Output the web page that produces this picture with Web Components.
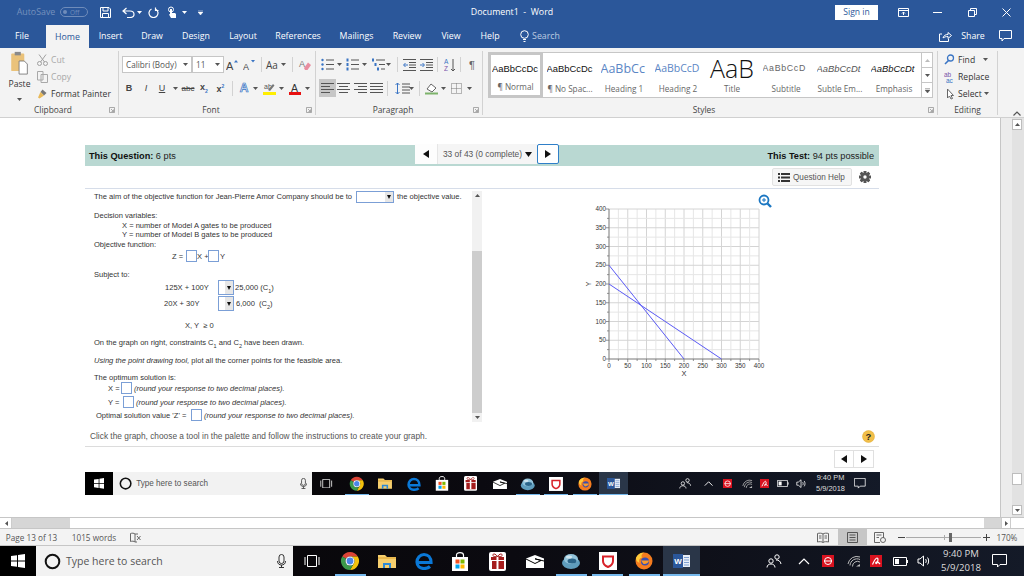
<!DOCTYPE html>
<html lang="en">
<head>
<meta charset="UTF-8">
<title>Document1 - Word</title>
<style>
html,body{margin:0;height:576px;overflow:hidden;background:#fff;font-family:"Open Sans","Noto Sans",sans-serif}
</style>
</head>
<body>
<word-app></word-app>

<script>
// helpers shared by the elements
const row = (x0, items) => {
  let p = x0
  return items.map(([c, w, h]) => {
    const l = c - w / 2
    const s = `<span class="c" style="width:${w}px;margin-left:${l - p}px">${h}</span>`
    p = l + w
    return s
  }).join("")
}
const svg = (w, h, body, extra = "") => `<svg width="${w}" height="${h}" viewBox="0 0 ${w} ${h}" ${extra}>${body}</svg>`
const tri = (col = "#555") => svg(5, 3, `<path d="M0 0H5L2.5 3Z" fill="${col}"/>`)
const vdiv = `<i style="display:block;width:1px;height:15px;background:#d2d2d2"></i>`
const cellCss = `.c{display:flex;align-items:center;justify-content:center;flex:none;height:100%;white-space:nowrap}`
const lines = (x, ys, w, col = "#555") => ys.map(y => `<path d="M${x} ${y}h${w}" stroke="${col}"/>`).join("")

class WordTitlebar extends HTMLElement {
  constructor() {
    super()
    this.attachShadow({ mode: "open" })
    const w = "#fff"
    this.shadowRoot.innerHTML = `
    <style>
      :host{display:flex;height:24px;background:#2b579a;color:#fff;font-size:8.8px}
      ${cellCss}
      .auto{color:#7591bd}
      .tog{width:28px;height:10px;border:1px solid #6f8cba;border-radius:6px;box-sizing:border-box;display:flex;align-items:center;gap:3px;padding-left:2px;font-size:6.5px;color:#6f8cba}
      .tog b{width:4px;height:4px;border-radius:50%;background:#6f8cba}
      .sign{background:#fff;color:#2b579a;width:43px;height:15px;display:flex;align-items:center;justify-content:center;font-size:8.6px}
    </style>
    ${row(0, [
      [36, 42, `<span class="auto">AutoSave</span>`],
      [74, 28, `<span class="tog"><b></b>Off</span>`],
      [105.5, 11, svg(11, 11, `<path d="M.5.5H9L10.5 2V10.5H.5Z M3 .5V4H8V.5 M2.5 10.5V6.5H8.5V10.5" fill="none" stroke="${w}"/>`)],
      [128, 13, svg(13, 11, `<path d="M4.5 1 1 4l3.5 3M1.5 4H8c2.5 0 4 1.500 4 3.300S10.500 10.500 8 10.500H5" fill="none" stroke="${w}" stroke-width="1.200"/>`)],
      [139, 5, tri(w)],
      [153, 11, svg(11, 11, `<path d="M3.500 2A4.500 4.500 0 1 0 7.500 2M7.500 .500V3.500H10.500" fill="none" stroke="${w}" stroke-width="1.200"/>`)],
      [172, 10, svg(10, 13, `<circle cx="4" cy="3.500" r="2.500" fill="none" stroke="${w}"/><path d="M3 3h2v4h3l1 1v4H4L2 8.500 3 8Z" fill="${w}"/>`)],
      [184.5, 5, tri(w)],
      [200, 5, svg(5, 5, `<path d="M0 0H5M0 2H5L2.500 5Z" fill="${w}" stroke="${w}" stroke-width=".5"/>`)],
      [512, 130, `<span>Document1&nbsp; - &nbsp;Word</span>`],
      [856.5, 43, `<span class="sign">Sign in</span>`],
      [903, 11, svg(11, 9, `<path d="M.5.5H10.500V8.500H.5ZM.5 2.500H10.500M5.500 7V4M4 5.500 5.500 4 7 5.500" fill="none" stroke="${w}"/>`)],
      [937.500, 9, svg(9, 1, `<path d="M0 .5H9" stroke="${w}"/>`)],
      [972, 9, svg(9, 9, `<path d="M.5 2.500H6.500V8.500H.5ZM2.500 2.500V.5H8.500V6.500H6.500" fill="none" stroke="${w}"/>`)],
      [1006, 9, svg(9, 9, `<path d="M.5.5 8.500 8.500M8.500.5.5 8.500" stroke="${w}"/>`)]
    ])}`
  }
}

class WordTabs extends HTMLElement {
  constructor() {
    super()
    this.attachShadow({ mode: "open" })
    const w = "#fff"
    const on = `<span class="home">Home</span>`
    this.shadowRoot.innerHTML = `
    <style>
      :host{display:flex;height:24px;background:#2b579a;color:#fff;font-size:8.8px}
      ${cellCss}
      .home{display:flex;align-items:center;justify-content:center;width:43px;height:23px;margin-top:1px;background:#f3f3f3;color:#2b579a}
      .dim{color:#bccbe0}
    </style>
    ${row(0, [
      [22, 20, "File"], [67.5, 43, on], [110.5, 22, "Insert"], [152, 22, "Draw"], [196, 30, "Design"],
      [243, 30, "Layout"], [298, 44, "References"], [356.5, 36, "Mailings"], [407, 30, "Review"], [451, 24, "View"], [490, 22, "Help"],
      [524.5, 9, svg(9, 13, `<circle cx="4.500" cy="4.500" r="3.800" fill="none" stroke="${w}"/><path d="M3 9.500H6M3.500 11.500H5.500" stroke="${w}"/>`)],
      [546, 30, `<span class="dim">Search</span>`],
      [945, 13, svg(13, 11, `<path d="M3 3H.5V10.500H9.500V8M4 7C4.500 4.500 6.500 3.500 9 3.500V1.500L12.500 4.500 9 7.500V5.500C7 5.500 5 6 4 7Z" fill="none" stroke="${w}"/>`)],
      [973, 26, "Share"],
      [1005.500, 13, svg(13, 12, `<path d="M.5.5H12.500V8.500H5L3 11V8.500H.5Z" fill="none" stroke="${w}"/>`)]
    ])}`
  }
}

class RibbonGroup extends HTMLElement {
  constructor() {
    super()
    this.attachShadow({ mode: "open" })
    const launcher = this.hasAttribute("launcher")
      ? `<span class="lc">${svg(6, 6, `<path d="M.5 5.500V.5H5.500V5.500ZM2 2 4.500 4.500M4.500 2.500V4.500H2.500" fill="none" stroke="#8a8a8a" stroke-width=".7"/>`)}</span>` : ""
    this.shadowRoot.innerHTML = `
    <style>
      :host{display:flex;flex-direction:column;flex:none;box-sizing:border-box;height:64px;border-right:1px solid #d2d2d2}
      .body{flex:1;min-height:0}
      .lbl{display:flex;height:12px;margin-bottom:-.5px;font-size:8.4px;color:#444;align-items:center}
      .lbl span:first-child{flex:1;text-align:center}
      .lc{width:12px;display:flex;justify-content:center}
    </style>
    <div class="body"><slot></slot></div>
    <div class="lbl"><span>${this.getAttribute("label")}</span>${launcher}</div>`
  }
}

class WordRibbon extends HTMLElement {
  constructor() {
    super()
    this.attachShadow({ mode: "open" })
    const blue = "#3a75c4", g = "#666"
    const t = tri()
    const bullets = svg(13, 13, `<g fill="${blue}"><circle cx="1.500" cy="2" r="1.200"/><circle cx="1.500" cy="6.500" r="1.200"/><circle cx="1.500" cy="11" r="1.200"/></g>${lines(5, [2, 6.5, 11], 8)}`)
    const numbers = svg(13, 13, `<g fill="${blue}"><rect x=".5" y=".5" width="2" height="3"/><rect x=".5" y="5" width="2" height="3"/><rect x=".5" y="9.500" width="2" height="3"/></g>${lines(5, [2, 6.5, 11], 8)}`)
    const multi = svg(13, 13, `<g fill="${blue}"><rect x="0" y=".5" width="2" height="3"/><rect x="2.500" y="5" width="2" height="3"/><rect x="5" y="9.500" width="2" height="3"/></g>${lines(4, [2], 9)}${lines(7, [6.5], 6)}${lines(9, [11], 4)}`)
    const indent = dir => svg(13, 12, `${lines(0, [.5, 11.5], 13)}${lines(6, [3.5, 6, 8.5], 7)}<path d="${dir ? "M0 6H4M2.500 4 4.500 6 2.500 8" : "M5 6H1M2.500 4 .5 6 2.500 8"}" fill="none" stroke="${blue}"/>`)
    const al = (a) => svg(13, 11, [.5, 3.5, 6.5, 9.5].map((y, i) => {
      const w = a == "j" ? 13 : (i % 2 ? 9 : 13)
      const x = a == "l" || a == "j" ? 0 : a == "c" ? (13 - w) / 2 : 13 - w
      return `<path d="M${x} ${y}h${w}" stroke="#555"/>`
    }).join(""))
    this.shadowRoot.innerHTML = `
    <style>
      :host{display:flex;height:70px;box-sizing:border-box;padding-top:3px;background:#f3f3f3;border-bottom:1px solid #d0d0d0;color:#444;font-size:8.6px;overflow:hidden}
      ${cellCss}
      .col{display:flex;flex-direction:column}
      .clip{display:flex;height:100%}
      .paste{width:37px;display:flex;flex-direction:column;align-items:center;padding-left:2px;box-sizing:border-box}
      .paste span{line-height:12px;margin-top:3px;margin-left:0;color:#333}
      .act{height:17px;display:flex;align-items:center;gap:3px;color:#333}
      .act.off{color:#a8a8a8}
      .act svg{flex:none}
      .r{display:flex;align-items:center}
      .r1{height:17px;margin-top:5px}
      .r2{height:18px;margin-top:6px}
      .combo{display:flex;width:100%;height:17px;box-sizing:border-box;background:#fff;border:1px solid #c6c6c6;align-items:center;justify-content:space-between;padding:0 3px;font-size:8.2px;color:#555}
      .sel{background:#c6c6c6;width:17px;height:18px;display:flex;align-items:center;justify-content:center}
      .tx{font:bold 9px "Liberation Sans",sans-serif;color:#444}
      .gal{display:flex;margin:1px 0 0 5px;width:445px;height:46px;box-sizing:border-box;border:1px solid #c6c6c6;background:#fff}
      .st{width:54px;flex:none;box-sizing:border-box;display:flex;flex-direction:column;align-items:center;overflow:hidden}
      .st:first-child{border:3px solid #c6c6c6;margin:-1px 0 -1px -1px;width:55px;height:46px}
      .st b{font-weight:400;height:30px;width:47px;overflow:hidden;white-space:nowrap;display:flex;align-items:center;justify-content:flex-start;font-family:"Liberation Sans",sans-serif;font-size:9.4px;color:#111}
      .st:first-child b{height:26px}
      .st u{text-decoration:none;font-size:8.2px;color:#666;line-height:12px;white-space:nowrap}
      .sc{margin-left:auto;width:11px;flex:none;display:flex;flex-direction:column;border-left:1px solid #c6c6c6}
      .sc span{flex:1;display:flex;align-items:center;justify-content:center;border-bottom:1px solid #c6c6c6}
      .sc span:last-child{border:0}
      .ed{padding-left:6px}
      .fold{display:flex;align-items:flex-end;padding:0 0 1px 8px}
    </style>
    <ribbon-group label="Clipboard" launcher style="width:119px">
      <div class="clip">
        <div class="paste">
          ${svg(21, 27, `<rect x="1" y="3" width="15" height="20" rx="1" fill="#eac27a"/><rect x="5" y="1" width="7" height="4" fill="#8a8a8a"/><path d="M10 11.500H16L19.500 15V26.500H10Z" fill="#fff" stroke="#777"/>`)}
          <span>Paste</span>
          <span style="margin:2px 0 0">${t}</span>
        </div>
        <div class="col">
          <div class="act off">${svg(11, 12, `<circle cx="2.500" cy="9.500" r="2" fill="none" stroke="#a0a0a0"/><circle cx="8.500" cy="9.500" r="2" fill="none" stroke="#a0a0a0"/><path d="M3.500 8 9 .5M7.500 8 2 .5" stroke="#a0a0a0"/>`)}Cut</div>
          <div class="act off">${svg(11, 12, `<path d="M.5.5H6V9H.5ZM4 3.500H10.500V11.500H4Z" fill="#f3f3f3" stroke="#a8a8a8"/>`)}Copy</div>
          <div class="act">${svg(11, 11, `<path d="M5.500 1.500 9.500 5 7 7.500 3.500 4Z" fill="#777"/><path d="M3.500 4 1 9.500 2.500 10.500 7 7.500Z" fill="#e8b959"/>`)}Format Painter</div>
        </div>
      </div>
    </ribbon-group>

    <ribbon-group label="Font" launcher style="width:197px">
      <div class="r r1">${row(119, [
        [157, 70, `<span class="combo">Calibri (Body) ${tri()}</span>`],
        [208, 32, `<span class="combo">11 ${tri()}</span>`],
        [232, 12, svg(12, 11, `<text x="0" y="10.500" font-family="Liberation Sans" font-size="11" fill="#444">A</text><path d="M8 3.500 10 1 12 3.500Z" fill="${blue}"/>`)],
        [249, 12, svg(12, 11, `<text x="0" y="10.500" font-family="Liberation Sans" font-size="9" fill="#444">A</text><path d="M8 1 10 3.500 12 1Z" fill="${blue}"/>`)],
        [261, 1, vdiv],
        [272, 14, `<span style="font-size:10px">Aa</span>`], [283, 5, t],
        [292, 1, vdiv],
        [304, 13, svg(13, 12, `<text x="1" y="8" font-family="Liberation Sans" font-size="9" fill="#777">A</text><path d="M6 9 10 3.500 13 6 9.500 11H7Z" fill="#e88ea0"/>`)]
      ])}</div>
      <div class="r r2">${row(119, [
        [129, 9, `<span class="tx">B</span>`],
        [146, 9, `<span class="tx" style="font-style:italic;font-weight:400">I</span>`],
        [162, 9, `<span class="tx" style="text-decoration:underline;font-weight:400">U</span>`],
        [175, 5, t],
        [188, 15, `<span style="font:8px 'Liberation Sans';text-decoration:line-through">abc</span>`],
        [204, 12, `<span class="tx">x<sub style="font-size:5px;color:${blue}">2</sub></span>`],
        [220.500, 12, `<span class="tx">x<sup style="font-size:5px;color:${blue}">2</sup></span>`],
        [232, 1, vdiv],
        [244, 12, `<span style="font:bold 12px 'Liberation Sans';color:#dbe7f6;-webkit-text-stroke:.7px ${blue}">A</span>`],
        [255, 5, t],
        [269, 13, svg(13, 13, `<text x="1" y="7" font-family="Liberation Sans" font-size="7" fill="#555">ab</text><path d="M5 8 10 2 11.500 3.500 7 9Z" fill="#777"/><rect y="10" width="13" height="3" fill="#ffee00"/>`)],
        [281, 5, t],
        [295, 12, svg(12, 13, `<text x="2" y="9.500" font-family="Liberation Sans" font-size="10.500" fill="#333">A</text><rect y="10" width="12" height="3" fill="#e81010"/>`)],
        [307, 5, t]
      ])}</div>
    </ribbon-group>

    <ribbon-group label="Paragraph" launcher style="width:167px">
      <div class="r r1">${row(316, [
        [327, 13, bullets], [339, 5, t], [352, 13, numbers], [364.500, 5, t], [378, 13, multi], [388.500, 5, t],
        [397, 1, vdiv], [409.500, 13, indent(0)], [426, 13, indent(1)], [437, 1, vdiv],
        [449.500, 12, svg(12, 14, `<text x="0" y="6" font-family="Liberation Sans" font-size="6.500" fill="${blue}">A</text><text x="0" y="13" font-family="Liberation Sans" font-size="6.500" fill="#7a52a8">Z</text><path d="M9 1V13M7 11l2 2 2-2" fill="none" stroke="#555"/>`)],
        [460, 1, vdiv],
        [472, 9, `<span style="font:11px 'Liberation Sans';color:#666">¶</span>`]
      ])}</div>
      <div class="r r2">${row(316, [
        [327, 17, `<span class="sel">${al("l")}</span>`], [343, 13, al("c")], [360, 13, al("r")], [376, 13, al("j")],
        [387, 1, vdiv],
        [402.500, 15, svg(15, 13, `<path d="M2.500 1V12M.5 3 2.500 1 4.500 3M.5 10 2.500 12 4.500 10" fill="none" stroke="${blue}"/>${lines(7, [2, 5, 8, 11], 8)}`)],
        [411, 5, t],
        [419, 1, vdiv],
        [431, 13, svg(13, 13, `<path d="M2 7 6 2 11 6 7 10Z" fill="#fff" stroke="#666"/><path d="M0 11.500H13" stroke="#7db36b" stroke-width="2"/>`)],
        [443, 5, t],
        [456, 11, svg(11, 11, `<path d="M.5.5H10.500V10.500H.5ZM5.500.5V10.500M.5 5.500H10.500" fill="none" stroke="#777" stroke-dasharray="1 1"/>`)],
        [469, 5, t]
      ])}</div>
    </ribbon-group>

    <ribbon-group label="Styles" launcher style="width:455px">
      <div class="gal">
        <div class="st"><b>AaBbCcDc</b><u>¶ Normal</u></div>
        <div class="st"><b>AaBbCcDc</b><u>¶ No Spac...</u></div>
        <div class="st"><b style="font:12.5px 'Open Sans';color:#5b86c5">AaBbCc</b><u>Heading 1</u></div>
        <div class="st"><b style="font:10.5px 'Open Sans';color:#5b86c5">AaBbCcD</b><u>Heading 2</u></div>
        <div class="st"><b style="font:25px 'Open Sans';font-weight:300;color:#111;justify-content:center">AaB</b><u>Title</u></div>
        <div class="st"><b style="color:#666;letter-spacing:.7px;font-size:8.800px">AaBbCcD</b><u>Subtitle</u></div>
        <div class="st"><b style="color:#555;font-style:italic">AaBbCcDt</b><u>Subtle Em...</u></div>
        <div class="st"><b style="font-style:italic">AaBbCcDt</b><u>Emphasis</u></div>
        <div class="sc">
          <span>${svg(5, 3, `<path d="M0 3H5L2.500 0Z" fill="#bbb"/>`)}</span>
          <span>${t}</span>
          <span>${svg(5, 5, `<path d="M0 .5H5M0 2H5L2.500 5Z" fill="#555" stroke="#555" stroke-width=".4"/>`)}</span>
        </div>
      </div>
    </ribbon-group>

    <ribbon-group label="Editing" style="width:60px">
      <div class="col ed">
        <div class="act">${svg(11, 11, `<circle cx="6.500" cy="4" r="3" fill="none" stroke="${blue}" stroke-width="1.300"/><path d="M4.500 6.500 1 10" stroke="${blue}" stroke-width="1.600"/>`)}<span>Find</span><span style="margin-left:5px;display:flex">${t}</span></div>
        <div class="act">${svg(11, 12, `<text x="0" y="5.500" font-family="Liberation Sans" font-size="6.500" fill="#7a52a8">ab</text><text x="2" y="11.500" font-family="Liberation Sans" font-size="6.500" fill="${blue}">ac</text>`)}<span>Replace</span></div>
        <div class="act">${svg(11, 12, `<path d="M3.500 1V10L5.500 8 7 11 8.500 10.500 7 7.500H9.500Z" fill="#fff" stroke="#666"/>`)}<span>Select</span><span style="display:flex;margin-left:-1px">${t}</span></div>
      </div>
    </ribbon-group>
    <div class="fold" style="margin-left:7px">${svg(8, 5, `<path d="M.5 4.500 4 1 7.500 4.500" fill="none" stroke="#555" stroke-width="1.200"/>`)}</div>`
  }
}

class AnswerBox extends HTMLElement {
  constructor() {
    super()
    this.attachShadow({ mode: "open" })
    this.shadowRoot.innerHTML = `<style>:host{display:inline-block;flex:none;box-sizing:border-box;width:11px;height:12px;background:#fff;border:1px solid #7b9fd6}</style>`
  }
}

class AnswerSelect extends HTMLElement {
  constructor() {
    super()
    this.attachShadow({ mode: "open" })
    this.shadowRoot.innerHTML = `
    <style>
      :host{display:inline-flex;flex:none;justify-content:flex-end;align-items:center;box-sizing:border-box;height:15px;width:16px;background:#fff;border:1px solid #7b9fd6}
      span{display:flex;align-items:center;justify-content:center;width:8px;height:100%;background:#e6e6e6}
    </style>
    <span>${svg(4, 4, `<path d="M0 0H4L2 4Z" fill="#111"/>`)}</span>`
  }
}

// one text line of the question: fixed height, gap above and left indent come from attributes
class QuizRow extends HTMLElement {
  constructor() {
    super()
    this.attachShadow({ mode: "open" })
    this.shadowRoot.innerHTML = `
    <style>:host{display:flex;align-items:center;white-space:nowrap}</style><slot></slot>`
  }
  connectedCallback() {
    this.style.height = (this.getAttribute("h") || 12) + "px"
    this.style.marginTop = (this.getAttribute("top") || 0) + "px"
    this.style.paddingLeft = (this.getAttribute("x") || 0) + "px"
  }
}

class QuizGraph extends HTMLElement {
  constructor() {
    super()
    this.attachShadow({ mode: "open" })
    // coordinates: 0,0 of the plot lands at 34,169 in this svg
    const x0 = 34, y0 = 169, k = 0.375
    let grid = "", ticks = "", labels = ""
    for (let v = 0; v <= 400; v += 25) {
      const x = x0 + v * k, y = y0 - v * k, major = v % 50 == 0
      const c = major ? "#d4d4d4" : "#e6e6e6"
      if (v) grid += `<path d="M${x} ${y0}V${y0 - 150}M${x0} ${y}H${x0 + 150}" stroke="${c}"/>`
      ticks += `<path d="M${x} ${y0}v${major ? 3 : 2}M${x0} ${y}h-${major ? 3 : 2}" stroke="#666" stroke-width=".7"/>`
      if (major) {
        labels += `<text x="${x}" y="${y0 + 9}" text-anchor="middle">${v}</text><text x="${x0 - 3}" y="${y + 2.2}" text-anchor="end">${v}</text>`
      }
    }
    const px = (a, b) => `${x0 + a * k} ${y0 - b * k}`
    this.shadowRoot.innerHTML = `
    <style>
      :host{display:block;flex:none;margin-left:93px;width:200px;height:190px}
      svg{display:block}
      text{font:6.300px "Liberation Sans",sans-serif;fill:#333}
    </style>
    ${svg(200, 190, `
      ${grid}${ticks}
      <path d="M${x0} ${y0 - 150}V${y0}H${x0 + 150}" fill="none" stroke="#777"/>
      <path d="M${px(0, 250)}L${px(200, 0)}M${px(0, 200)}L${px(300, 0)}" stroke="#5a5af5" fill="none"/>
      ${labels}
      <text x="${x0 + 75}" y="${y0 + 17}" text-anchor="middle" style="font-size:7.5px">X</text>
      <text transform="translate(16 ${y0 - 75}) rotate(-90)" text-anchor="middle" style="font-size:7.5px">Y</text>
      <g transform="translate(183 4)" fill="none" stroke="#1a76c2">
        <circle cx="6" cy="6" r="4.500" stroke-width="1.800"/>
        <path d="M9.500 9.500 13 13" stroke-width="2.400"/>
        <path d="M4 6H8M6 4V8"/>
      </g>`)}`
  }
}

class QuizPanel extends HTMLElement {
  constructor() {
    super()
    this.attachShadow({ mode: "open" })
    const arrow = d => svg(6, 8, d == "l" ? `<path d="M6 0V8L0 4Z" fill="#111"/>` : `<path d="M0 0V8L6 4Z" fill="#111"/>`)
    const gear = Array.from({ length: 8 }, (_, i) => `<rect x="5.500" y="0" width="3" height="14" fill="#555" transform="rotate(${i * 45} 7 7)"/>`).join("")
    const sub = n => `<sub style="font-size:5.500px;line-height:0">${n}</sub>`
    this.shadowRoot.innerHTML = `
    <style>
      :host{display:block;width:794px;font:7.550px "Liberation Sans",sans-serif;color:#333}
      .bar{display:grid;grid-template-columns:326px auto 1fr;align-items:center;height:21px;background:#b9d8d2;padding:0 5px 0 4px;font-size:9.200px;color:#222}
      .bar b{color:#111}
      .bar div:last-child{text-align:right}
      .nav{display:flex;height:20px;align-self:start;margin-top:-1px;font-size:8.400px;color:#555}
      .nav span{display:flex;align-items:center;justify-content:center;box-sizing:border-box}
      .prev{width:22px;background:#fdfdfd}
      .mid{width:100px;background:#f5f5f5;gap:3px;border-left:1px solid #e6e6e6}
      .next{width:22px;background:#fff;border:1.500px solid #2f7fc8;border-radius:2px}
      .tools{display:flex;justify-content:flex-end;align-items:center;height:22px;padding-right:8px;gap:7px;border-bottom:1px solid #d6dde9}
      .help{display:flex;align-items:center;gap:3px;box-sizing:border-box;height:18px;width:80px;padding-left:5px;background:#f6f6f6;border:1px solid #e2e2e2;border-radius:2px;font-size:8.200px;color:#555}
      .main{display:flex;height:232px;margin-top:1px}
      .q{position:relative;width:397px;box-sizing:border-box;padding-left:9px;flex:none}
      .sb{position:absolute;left:387px;top:1px;width:10px;height:231px;background:#f1f1f1;display:flex;flex-direction:column;justify-content:space-between;align-items:center;padding:3px 0;box-sizing:border-box}
      .thumb{position:absolute;left:0;top:60px;width:10px;height:162px;background:#cdcdcd}
      .sb svg{position:relative}
      i{font-style:italic}
      .hint{display:flex;justify-content:space-between;align-items:center;box-sizing:border-box;height:24px;margin-top:1px;padding:3px 2px 0 5px;border-bottom:1px solid #dcdcdc;font-size:8.330px;color:#555}
      .pager{display:flex;justify-content:flex-end;height:25px;padding:3px 5px 0 0;box-sizing:border-box}
      .pager span{display:flex;align-items:center;justify-content:center;width:20px;height:18px;box-sizing:border-box;border:1px solid #e0e0e0;background:#fff}
      .w{display:inline-block}
    </style>
    <div class="bar">
      <div><b>This Question:</b> 6 pts</div>
      <div class="nav"><span class="prev">${arrow("l")}</span><span class="mid">33 of 43 (0 complete) ${svg(7, 5, `<path d="M0 0H7L3.500 5Z" fill="#111"/>`)}</span><span class="next">${arrow("r")}</span></div>
      <div><b>This Test:</b> 94 pts possible</div>
    </div>
    <div class="tools">
      <div class="help">${svg(12, 9, `<path d="M0 .0h2v2H0zM3 0h9v2H3zM0 3.500h2v2H0zM3 3.500h9v2H3zM0 7h2v2H0zM3 7h9v2H3z" fill="#333"/>`)}Question Help</div>
      <svg width="12" height="12" viewBox="0 0 14 14">${gear}<circle cx="7" cy="7" r="5" fill="#555"/><circle cx="7" cy="7" r="2" fill="#fff"/></svg>
    </div>
    <div class="main">
      <div class="q">
        <quiz-row h="13">The aim of the objective function for Jean-Pierre Amor Company should be to
          <answer-select style="width:38px;height:12px;margin:0 3px 0 4px"></answer-select>the objective value.</quiz-row>
        <quiz-row top="6">Decision variables:</quiz-row>
        <quiz-row h="9" x="28">X = number of Model A gates to be produced</quiz-row>
        <quiz-row h="9" x="28">Y = number of Model B gates to be produced</quiz-row>
        <quiz-row h="10">Objective function:</quiz-row>
        <quiz-row top="1" x="78"><span class="w" style="width:14px">Z =</span><answer-box></answer-box><span class="w" style="width:11px">X +</span><answer-box></answer-box><span style="margin-left:1px">Y</span></quiz-row>
        <quiz-row top="6">Subject to:</quiz-row>
        <quiz-row h="15" x="71"><span class="w" style="width:53px">125X + 100Y</span><answer-select></answer-select><span style="margin-left:1px">25,000 (C${sub(1)})</span></quiz-row>
        <quiz-row h="15" top="1" x="70"><span class="w" style="width:54px">20X + 30Y</span><answer-select></answer-select><span style="margin-left:2px">6,000&nbsp; (C${sub(2)})</span></quiz-row>
        <quiz-row top="8" x="91">X, Y &nbsp;≥ 0</quiz-row>
        <quiz-row top="5"><span>On the graph on right, constraints C${sub(1)} and C${sub(2)} have been drawn.</span></quiz-row>
        <quiz-row top="6"><i>Using the point drawing tool,</i>&nbsp;plot all the corner points for the feasible area.</quiz-row>
        <quiz-row h="10" top="6">The optimum solution is:</quiz-row>
        <quiz-row x="14"><span class="w" style="width:13px">X =</span><answer-box></answer-box><i style="margin-left:2px">(round your response to two decimal places).</i></quiz-row>
        <quiz-row top="2" x="14"><span class="w" style="width:15px">Y =</span><answer-box></answer-box><i style="margin-left:2px">(round your response to two decimal places).</i></quiz-row>
        <quiz-row top="1" x="2"><span class="w" style="width:95px">Optimal solution value 'Z' =</span><answer-box></answer-box><i style="margin-left:2px">(round your response to two decimal places).</i></quiz-row>
        <div class="sb">
          <div class="thumb"></div>
          ${svg(5, 3, `<path d="M0 3H5L2.500 0Z" fill="#555"/>`)}
          ${svg(5, 3, `<path d="M0 0H5L2.500 3Z" fill="#555"/>`)}
        </div>
      </div>
      <quiz-graph></quiz-graph>
    </div>
    <div class="hint">
      <span>Click the graph, choose a tool in the palette and follow the instructions to create your graph.</span>
      ${svg(13, 13, `<circle cx="6.500" cy="6.500" r="6" fill="#f1bf4a" stroke="#e0a92c" stroke-width=".5"/><text x="6.500" y="10" text-anchor="middle" font-family="Liberation Sans" font-weight="700" font-size="9.500" fill="#222">?</text>`, 'style="margin-right:2px"')}
    </div>
    <div class="pager"><span>${arrow("l")}</span><span style="border-left:0">${arrow("r")}</span></div>
    <win-taskbar small></win-taskbar>`
  }
}

class WinTaskbar extends HTMLElement {
  constructor() {
    super()
    this.attachShadow({ mode: "open" })
    const w = "#fff"
    const chrome = svg(20, 20, `
      <path d="M2.200 5.500A9 9 0 0 1 17.800 5.500H10A4.500 4.500 0 0 0 6.100 7.750Z" fill="#db4437"/>
      <path d="M17.800 5.500A9 9 0 0 1 10 19L13.900 12.250A4.500 4.500 0 0 0 10 5.500Z" fill="#f4c20d"/>
      <path d="M10 19A9 9 0 0 1 2.200 5.500L6.100 7.750A4.500 4.500 0 0 0 13.900 12.250Z" fill="#3c9a4b"/>
      <circle cx="10" cy="10" r="4.500" fill="#fff"/><circle cx="10" cy="10" r="3.400" fill="#4a86e8"/>`)
    const folder = svg(18, 16, `<path d="M0 2H7L9 4H18V15H0Z" fill="#f6cf6e"/><path d="M0 4H18V6H0Z" fill="#e8b84e"/><path d="M5 15V10H13V15H11V12H7V15Z" fill="#2d8ad6"/>`)
    const edge = svg(18, 18, `<path d="M3.500 10.500H16C16 5.500 13 2.500 9 2.500 5 2.500 2 6 2 10s3 6.500 7 6.500c2.500 0 4.500-.7 6-2" fill="none" stroke="#0a78d7" stroke-width="3.200"/>`)
    const store = svg(18, 19, `<path d="M1 5H17V19H1Z" fill="#fff"/><path d="M5.500 5V3C5.500 1.500 7 .7 9 .7S12.500 1.500 12.500 3V5" fill="none" stroke="#fff" stroke-width="1.200"/><rect x="4.500" y="7.500" width="4" height="4" fill="#f25022"/><rect x="9.500" y="7.500" width="4" height="4" fill="#7fba00"/><rect x="4.500" y="12.500" width="4" height="4" fill="#00a4ef"/><rect x="9.500" y="12.500" width="4" height="4" fill="#ffb900"/>`)
    const gift = svg(17, 19, `<rect width="17" height="19" rx="2" fill="#fff"/><path d="M2 5H15V8H2ZM3 9H15V17H3ZM8 5V17" fill="#a51d1d"/><path d="M7.500 5h2v12h-2z" fill="#fff"/><path d="M8.500 4.500C6 1 3.500 1.500 4 3.500S7 4.500 8.500 4.500C11 1 13.500 1.500 13 3.500S10 4.500 8.500 4.500" fill="none" stroke="#a51d1d"/>`)
    const mail = svg(18, 13, `<path d="M0 3.500 9 0 18 3.500V13H0Z" fill="#fff"/><path d="M0 4 9 8.500 15 5.500 9 3.800 18 6" fill="none" stroke="#000"/>`)
    const swirl = svg(20, 18, `<ellipse cx="10" cy="11" rx="9" ry="6" fill="#5f9dbd"/><ellipse cx="10" cy="7" rx="7" ry="5" fill="#92c3da"/><ellipse cx="11" cy="9" rx="4.500" ry="2.500" fill="#2b6488"/><ellipse cx="8" cy="5" rx="3" ry="1.500" fill="#d0e4ee"/>`)
    const shield = svg(18, 18, `<rect width="18" height="18" fill="#fff"/><path d="M4 4.500H14V9C14 12 11.500 14 9 15 6.500 14 4 12 4 9Z" fill="none" stroke="#d8232a" stroke-width="2"/>`)
    const fox = svg(18, 18, `<circle cx="9" cy="9" r="8.500" fill="#f57c1f"/><circle cx="10" cy="9.500" r="4" fill="#3a4fb0"/><path d="M1 6C2 3 5 .7 9 .5 6.500 2 6 4 7 5.500 4.500 6 3.500 8 4.500 11 2 10 1 8 1 6Z" fill="#ffcb3a"/><path d="M6 8.500H14C13.500 11 11 12.500 8.500 12Z" fill="#f89a2b"/>`)
    const word = svg(17, 14, `<rect x="7" y="1" width="10" height="12" fill="#e8eef7"/><path d="M11 3.500H16M11 6H16M11 8.500H16M11 11H16" stroke="#7d9fd0"/><rect y="0" width="10" height="14" fill="#2b579a"/><text x="5" y="10" text-anchor="middle" font-family="Liberation Sans" font-weight="700" font-size="8" fill="#fff">W</text>`)
    const app = (cx, icon, under, sel) => [cx, 37, `<span class="app${sel ? " sel" : ""}${under ? " run" : ""}">${icon}</span>`]
    this.shadowRoot.innerHTML = `
    <style>
      :host{display:flex;flex:none;width:1024px;height:30px;background:linear-gradient(100deg,#060404,#0b0a10 50%,#141a28);color:#fff}
      :host([small]){zoom:.776}
      ${cellCss}
      .win{width:36px;background:#000;display:flex;align-items:center;justify-content:center;flex:none}
      .search{width:257px;flex:none;background:#f2f2f2;display:flex;align-items:center;box-sizing:border-box;padding:0 7px 0 8px;color:#555;font-size:10.500px}
      .search span{flex:1;margin-left:5px}
      .app{display:flex;align-items:center;justify-content:center;width:37px;height:30px;box-sizing:border-box;position:relative}
      .app.run:after{content:"";position:absolute;left:3px;right:3px;bottom:0;height:2px;background:#76b9ed}
      .app.sel{background:#2a3648}
      .app.sel:after{left:0;right:0}
      .clock{display:flex;flex-direction:column;align-items:center;font-size:9.600px;line-height:14px;color:#ddd}
      .apps{display:flex;height:30px}
    </style>
    <div class="win">${svg(14, 14, `<path d="M0 2 6 1.200V6.500H0ZM7 1 14 0V6.500H7ZM0 7.500H6V12.800L0 12ZM7 7.500H14V14L7 13Z" fill="${w}"/>`)}</div>
    <div class="search">
      ${svg(17, 17, `<circle cx="8.500" cy="8.500" r="6.800" fill="none" stroke="#111" stroke-width="2"/>`)}
      <span>Type here to search</span>
      ${svg(9, 14, `<rect x="2" y=".5" width="5" height="9" rx="2.500" fill="none" stroke="#333"/><path d="M.5 7C.5 10 2.500 11 4.500 11S8.500 10 8.500 7M4.500 11V13.500M2 13.500H7" fill="none" stroke="#333"/>`)}
    </div>
    <div class="apps">${row(293, [
      [311.500, 37, `<span class="app">${svg(16, 12, `<path d="M3.500.5H12.500V11.500H3.500ZM1 2V10M15 2V10" fill="none" stroke="${w}"/>`)}</span>`],
      app(350, chrome, 1), app(386.500, folder, 0), app(423.500, edge, 0), app(460, store, 0), app(497, gift, 0), app(535, mail, 0),
      app(571, swirl, 1), app(607.500, shield, 1), app(644, fox, 1), app(681, word, 1, 1),
      [774, 16, svg(16, 14, `<circle cx="5" cy="7" r="2.200" fill="none" stroke="${w}"/><path d="M1 13.500C1 11 3 10 5 10S9 11 9 13.500" fill="none" stroke="${w}"/><circle cx="11" cy="3" r="2.200" fill="none" stroke="${w}"/><path d="M10 6C12.500 6 14.500 7 15 10" fill="none" stroke="${w}"/>`)],
      [804, 12, svg(12, 7, `<path d="M1 6 6 1 11 6" fill="none" stroke="${w}" stroke-width="1.200"/>`)],
      [828, 12, svg(12, 12, `<rect width="12" height="12" fill="#d9121f"/><circle cx="6" cy="6" r="3.500" fill="none" stroke="#fff"/><path d="M2 6H10" stroke="#fff"/>`)],
      [854, 14, svg(14, 12, `<g fill="none" stroke="#bbb"><path d="M1 9A9 9 0 0 1 13 2"/><path d="M3 10.500A7 7 0 0 1 13 4.500"/><path d="M5.500 11.500A5 5 0 0 1 13 7"/></g><path d="M9 11.500H13V9Z" fill="#bbb"/>`)],
      [876, 12, svg(12, 12, `<rect width="12" height="12" fill="#d9121f"/><path d="M2.500 9.500C4 6 5.500 3 7 3 8.500 3 8 6.500 7 8 6 9.500 5 7.500 6.500 7 8 6.500 9 8 10 9" fill="none" stroke="#fff" stroke-width="1.200"/>`)],
      [900, 15, svg(15, 9, `<path d="M.5.5H13.500V8.500H.5ZM14.500 3V6" fill="none" stroke="${w}"/><rect x="2" y="2" width="4" height="5" fill="${w}"/>`)],
      [924, 14, svg(14, 12, `<path d="M1 4H3L6.500 1V11L3 8H1Z" fill="none" stroke="${w}"/><path d="M8.500 4C9.500 5 9.500 7 8.500 8M10.500 2.500C12 4 12 8 10.500 9.500" fill="none" stroke="${w}"/>`)],
      [961, 50, `<span class="clock"><span>9:40 PM</span><span>5/9/2018</span></span>`],
      [999, 15, svg(15, 14, `<path d="M.5.5H14.500V10.500H8L5.500 13V10.500H.5Z" fill="none" stroke="${w}"/>`)]
    ])}</div>`
  }
}

class DocView extends HTMLElement {
  constructor() {
    super()
    this.attachShadow({ mode: "open" })
    this.shadowRoot.innerHTML = `
    <style>
      :host{display:flex;height:399px;background:#fff}
      .page{flex:1;padding:27px 0 0 85px;box-sizing:border-box;min-width:0}
      .vs{width:24px;flex:none;box-sizing:border-box;border-left:1px solid #c6c6c6;background:linear-gradient(90deg,#ececec 11px,#e2e2e2 11px);display:flex;flex-direction:column;align-items:flex-end;padding:1px 2px 2px 0}
      .btn{width:10px;height:11px;background:#fff;border:1px solid #bdbdbd;box-sizing:border-box;display:flex;align-items:center;justify-content:center}
      .th{margin-top:auto;height:12px}
      .dn{margin-top:20px;height:10px}
    </style>
    <div class="page"><slot></slot></div>
    <div class="vs">
      <span class="btn">${svg(5, 3, `<path d="M0 3H5L2.500 0Z" fill="#555"/>`)}</span>
      <span class="btn th"></span>
      <span class="btn dn">${svg(5, 3, `<path d="M0 0H5L2.500 3Z" fill="#555"/>`)}</span>
    </div>`
  }
}

class WordHscroll extends HTMLElement {
  constructor() {
    super()
    this.attachShadow({ mode: "open" })
    this.shadowRoot.innerHTML = `
    <style>
      :host{display:flex;height:12px;box-sizing:border-box;border-top:1px solid #c6c6c6;border-bottom:1px solid #c6c6c6;background:#fff}
      span{display:flex;align-items:center;justify-content:center;box-sizing:border-box;flex:none}
      .b{width:11px;background:#fff;border-right:1px solid #ccc;margin-left:1px}
      .g{background:#d6d6d6}
      .w{flex:1}
    </style>
    <span class="b">${svg(3, 5, `<path d="M3 0V5L0 2.500Z" fill="#555"/>`)}</span>
    <span class="g" style="width:58px"></span>
    <span class="w"></span>
    <span class="g" style="width:17px"></span>
    <span class="b" style="width:10px;margin:0;border-left:1px solid #ccc">${svg(3, 5, `<path d="M0 0V5L3 2.500Z" fill="#555"/>`)}</span>
    <span style="width:13px"></span>`
  }
}

class WordStatus extends HTMLElement {
  constructor() {
    super()
    this.attachShadow({ mode: "open" })
    const g = "#666"
    this.shadowRoot.innerHTML = `
    <style>
      :host{display:flex;height:17px;box-sizing:border-box;background:#f3f3f3;border-bottom:1px solid #c6c6c6;color:#555;font-size:8.200px}
      ${cellCss}
      .on{display:flex;align-items:center;justify-content:center;width:29px;height:16px;background:#c6c6c6}
    </style>
    ${row(0, [
      [31.500, 54, "Page 13 of 13"],
      [94, 46, "1015 words"],
      [135, 11, svg(11, 11, `<path d="M5 2C4 1 2 1 .5 1.500V9.500C2 9 4 9 5 10V2ZM5 2H8M5 10H7" fill="none" stroke="${g}"/><path d="M7 4 10.500 8M10.500 4 7 8" stroke="${g}"/>`)],
      [823, 12, svg(12, 11, `<path d="M6 2C5 1 2 1 .5 1.500V10C2 9.500 5 9.500 6 10.500 7 9.500 10 9.500 11.500 10V1.500C10 1 7 1 6 2ZM6 2V10.500M2 4H4.500M2 6H4.500M7.500 4H10M7.500 6H10" fill="none" stroke="${g}"/>`)],
      [852.500, 29, `<span class="on">${svg(11, 11, `<path d="M.5.5H10.500V10.500H.5ZM2.500 3H8.500M2.500 5.500H8.500M2.500 8H8.500" fill="none" stroke="#555"/>`)}</span>`],
      [880, 12, svg(12, 11, `<path d="M.5.5H9.500V6M.5.5V10.500H6M2.500 3H7.500M2.500 5.500H5" fill="none" stroke="${g}"/><circle cx="9" cy="8" r="2.500" fill="none" stroke="${g}"/>`)],
      [901, 7, svg(7, 1, `<path d="M0 .5H7" stroke="#444"/>`)],
      [943, 75, `<svg width="75" height="9" viewBox="0 0 75 9"><path d="M0 4.500H75M38.500 2V7" stroke="#aaa"/><rect x="43" y="0" width="3" height="9" fill="#666"/></svg>`],
      [986, 7, svg(7, 7, `<path d="M0 3.500H7M3.500 0V7" stroke="#444"/>`)],
      [1007, 26, "170%"]
    ])}`
  }
}

class WordApp extends HTMLElement {
  constructor() {
    super()
    this.attachShadow({ mode: "open" })
    this.shadowRoot.innerHTML = `
    <style>:host{display:flex;flex-direction:column;width:1024px;height:576px;overflow:hidden}</style>
    <word-titlebar></word-titlebar>
    <word-tabs></word-tabs>
    <word-ribbon></word-ribbon>
    <doc-view><quiz-panel></quiz-panel></doc-view>
    <word-hscroll></word-hscroll>
    <word-status></word-status>
    <win-taskbar></win-taskbar>`
  }
}

customElements.define("word-titlebar", WordTitlebar)
customElements.define("word-tabs", WordTabs)
customElements.define("ribbon-group", RibbonGroup)
customElements.define("word-ribbon", WordRibbon)
customElements.define("answer-box", AnswerBox)
customElements.define("answer-select", AnswerSelect)
customElements.define("quiz-row", QuizRow)
customElements.define("quiz-graph", QuizGraph)
customElements.define("win-taskbar", WinTaskbar)
customElements.define("quiz-panel", QuizPanel)
customElements.define("doc-view", DocView)
customElements.define("word-hscroll", WordHscroll)
customElements.define("word-status", WordStatus)
customElements.define("word-app", WordApp)
</script>
</body>
</html>
